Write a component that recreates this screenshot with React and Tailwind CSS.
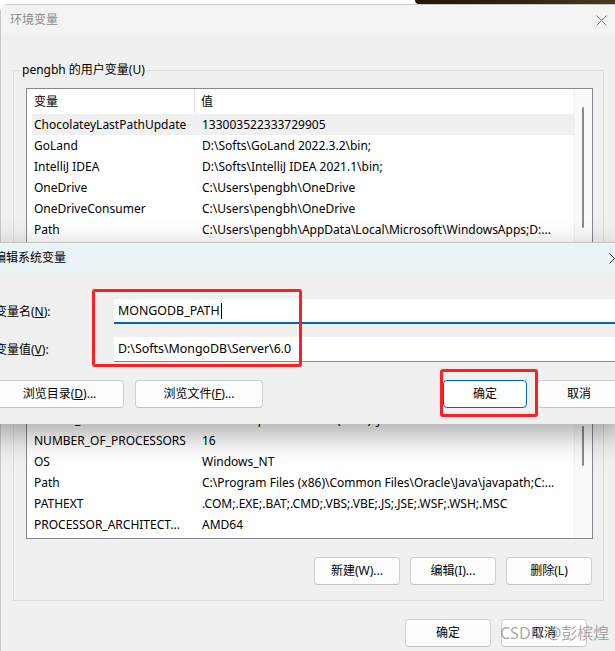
// App.jsx
const FONT = "font-['Noto_Sans','Noto_Sans_CJK_SC',sans-serif]";

const userVars = [
  ["ChocolateyLastPathUpdate", "133003522333729905", true],
  ["GoLand", "D:\\Softs\\GoLand 2022.3.2\\bin;"],
  ["IntelliJ IDEA", "D:\\Softs\\IntelliJ IDEA 2021.1\\bin;"],
  ["OneDrive", "C:\\Users\\pengbh\\OneDrive"],
  ["OneDriveConsumer", "C:\\Users\\pengbh\\OneDrive"],
  ["Path", "C:\\Users\\pengbh\\AppData\\Local\\Microsoft\\WindowsApps;D:..."],
  ["TEMP", "C:\\Users\\pengbh\\AppData\\Local\\Temp"],
];

const sysVars = [
  ["ComSpec", "C:\\Windows\\system32\\cmd.exe"],
  ["DriverData", "C:\\Windows\\System32\\Drivers\\DriverData"],
  ["MAVEN_HOME", "D:\\Softs\\apache-maven (3.8.6)\\y"],
  ["NUMBER_OF_PROCESSORS", "16"],
  ["OS", "Windows_NT"],
  ["Path", "C:\\Program Files (x86)\\Common Files\\Oracle\\Java\\javapath;C:..."],
  ["PATHEXT", ".COM;.EXE;.BAT;.CMD;.VBS;.VBE;.JS;.JSE;.WSF;.WSH;.MSC"],
  ["PROCESSOR_ARCHITECT...", "AMD64"],
];

function CloseIcon({ className }) {
  return (
    <svg width="11" height="11" viewBox="0 0 11 11" className={className}>
      <path d="M0.5 0.5 L10.5 10.5 M10.5 0.5 L0.5 10.5" stroke="currentColor" strokeWidth="1" fill="none" />
    </svg>
  );
}

function Btn({ children, className = "", focus = false }) {
  return (
    <div
      className={`flex h-[28px] items-center justify-center rounded-[4px] border ${
        focus ? "border-[#0067c0] bg-white" : "border-[#d0d0d0] border-b-[#c2c2c2] bg-[#fdfdfd]"
      } ${className}`}
    >
      {children}
    </div>
  );
}

function VarList({ rows, heightClass, thumbClass }) {
  return (
    <div className={`flex overflow-hidden border border-[#828790] bg-white ${heightClass}`}>
      <div className="flex-1 overflow-hidden pl-[5px]">
        <div className="flex h-[25px] items-center">
          <div className="flex h-full w-[163px] items-center border-r border-[#e5e5e5] pl-[2px]">变量</div>
          <div className="pl-[6px]">值</div>
        </div>
        {rows.map(([name, value, hot]) => (
          <div key={name + value} className={`flex h-[21px] items-center ${hot ? "bg-[#f0f0f0]" : ""}`}>
            <div className="w-[163px] shrink-0 truncate pl-[2px]">{name}</div>
            <div className="whitespace-nowrap pl-[7px]">{value}</div>
          </div>
        ))}
      </div>
      <div className="w-[18px] shrink-0 border-l border-[#f0f0f0] bg-[#fafafa] pl-[7px]">
        <div className={`w-[2px] rounded-full bg-[#8a8a8a] ${thumbClass}`} />
      </div>
    </div>
  );
}

export default function App() {
  return (
    <div className={`relative h-[651px] w-[615px] overflow-hidden bg-white text-[12px] leading-[16px] text-black ${FONT}`}>
      {/* desktop strip */}
      <div className="flex h-[4px]">
        <div className="flex-1" />
        <div className="w-[200px] rounded-bl-[6px] bg-gradient-to-r from-[#20170c] via-[#2e2210] to-[#4a3a1c]" />
      </div>

      {/* 环境变量 window */}
      <div className="flex h-[647px] flex-col rounded-tl-[8px] border-l border-t border-[#c8c8c8] bg-[#f0f0f0]">
        <div className="flex h-[30px] shrink-0 items-center justify-between bg-[#f3f3f3] pl-[9px] pr-[8px] text-[#8a8a8a]">
          <span>环境变量</span>
          <CloseIcon className="text-[#7a7a7a]" />
        </div>

        <div className="flex flex-col pl-[12px] pr-[11px] pt-[27px]">
          <fieldset className="border border-[#dcdcdc] pl-[6px] pr-[10px] pb-[15px]">
            <legend className="px-[2px]">pengbh 的用户变量(U)</legend>
            <div className="ml-[6px] mt-[10px]">
              <VarList rows={userVars} heightClass="h-[160px]" thumbClass="mt-[18px] h-[121px]" />
            </div>
            <div className="mt-[10px] flex justify-end gap-[10px] pr-[2px]">
              <Btn className="w-[86px]">新建(N)...</Btn>
              <Btn className="w-[86px]">编辑(E)...</Btn>
              <Btn className="w-[86px]">删除(D)</Btn>
            </div>
          </fieldset>

          <fieldset className="mt-[13px] border border-[#dcdcdc] pl-[6px] pr-[10px] pb-[15px]">
            <legend className="px-[2px]">系统变量(S)</legend>
            <div className="ml-[6px] mt-[10px]">
              <VarList rows={sysVars} heightClass="h-[198px]" thumbClass="mt-[84px] h-[40px]" />
            </div>
            <div className="mt-[18px] flex justify-end gap-[10px] pr-[1px]">
              <Btn className="w-[86px]">新建(W)...</Btn>
              <Btn className="w-[86px]">编辑(I)...</Btn>
              <Btn className="w-[86px]">删除(L)</Btn>
            </div>
          </fieldset>

          <div className="mt-[18px] flex justify-end gap-[10px] pr-[17px]">
            <Btn className="w-[86px]">确定</Btn>
            <Btn className="w-[86px]">取消</Btn>
          </div>
        </div>
      </div>

      {/* 编辑系统变量 dialog */}
      <div className="absolute left-[-18px] top-[242px] flex h-[182px] w-[640px] flex-col border-t border-[#c6c6c6] bg-[#f0f0f0] shadow-[0_10px_28px_rgba(0,0,0,0.35)]">
        <div className="flex h-[30px] shrink-0 items-center justify-between bg-[#eaf3f6] pl-[12px] pr-[2px]">
          <span>编辑系统变量</span>
          <CloseIcon className="text-[#333]" />
        </div>
        <div className="flex flex-col pl-[13px] pt-[26px]">
          <div className="flex h-[25px] items-center">
            <div className="w-[119px] shrink-0">
              变量名(<span className="underline">N</span>):
            </div>
            <div className="flex h-[25px] flex-1 items-center border-b-2 border-[#0067c0] bg-white pl-[4px] text-[12.4px]">
              MONGODB_PATH
              <span className="ml-[1px] h-[16px] w-[1px] bg-black" />
            </div>
          </div>
          <div className="mt-[13px] flex h-[25px] items-center">
            <div className="w-[119px] shrink-0">
              变量值(<span className="underline">V</span>):
            </div>
            <div className="flex h-[25px] flex-1 items-center border-b border-[#8a8a8a] bg-white pl-[4px] text-[12.4px]">
              D:\Softs\MongoDB\Server\6.0
            </div>
          </div>
          <div className="mt-[18px] flex items-center">
            <Btn className="w-[129px]">
              浏览目录(<span className="underline">D</span>)...
            </Btn>
            <Btn className="ml-[11px] w-[128px]">
              浏览文件(<span className="underline">F</span>)...
            </Btn>
            <Btn focus className="ml-[180px] w-[84px]">确定</Btn>
            <Btn className="ml-[10px] w-[84px]">取消</Btn>
          </div>
        </div>
      </div>

      {/* red annotation boxes */}
      <div className="absolute left-[92px] top-[289px] h-[78px] w-[210px] rounded-[3px] border-[3px] border-[#ff1f1f]" />
      <div className="absolute left-[440px] top-[369px] h-[48px] w-[98px] rounded-[3px] border-[3px] border-[#ff1f1f]" />

      {/* watermark */}
      <div className="absolute left-[500px] top-[623px] text-[16px] leading-[20px] text-[rgba(140,140,140,0.75)]">
        CSDN @彭槟煌
      </div>
    </div>
  );
}
